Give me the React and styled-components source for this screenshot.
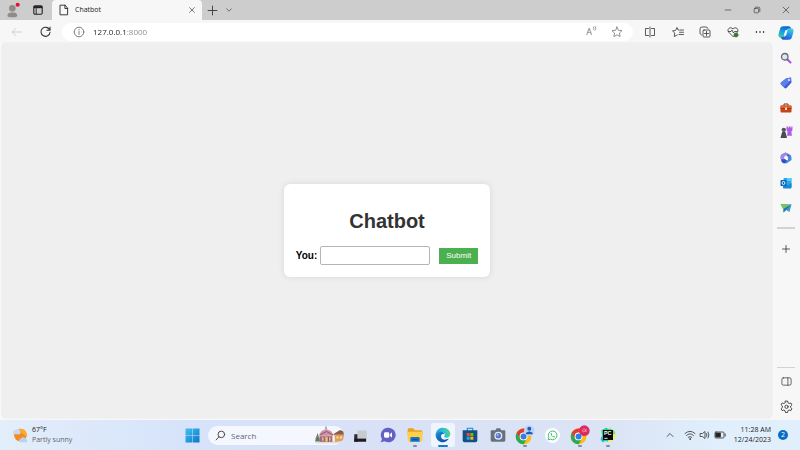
import React, { useState } from 'react';
import styled, { createGlobalStyle } from 'styled-components';

const ReloadIcon = () => (
	<Line viewBox="0 0 20 20" $size={13}>
		<path d="M16.6 8A7 7 0 1 0 17 11.2M17 3v5h-5" />
	</Line>
);

const ProfileIcon = () => (
	<Icon viewBox="0 0 22 22" $size={18}>
		<circle cx="9" cy="9" r="4" fill="#8f8b88" />
		<path d="M3 18.5c0-3 1.5-4.5 4-4.5h4c2.5 0 4 1.5 4 4.5-2.500 2-9.500 2-12 0z" fill="#8f8b88" />
		<circle cx="15.500" cy="4.500" r="2.500" fill="#e3152b" />
	</Icon>
);

const WorkspaceIcon = () => (
	<Icon viewBox="0 0 20 20" $size={12}>
		<rect x="3" y="3" width="14" height="14" rx="2" fill="none" stroke="#222" strokeWidth="1.8" />
		<path d="M3 3.5h14v3.500H3z" fill="#222" />
		<path d="M7 7v10" stroke="#222" strokeWidth="1.6" />
	</Icon>
);

const SearchColorIcon = () => (
	<Icon viewBox="0 0 24 24" $size={12}>
		<path d="M15 15l6 6" stroke="#a44fe0" strokeWidth="4" strokeLinecap="round" />
		<circle cx="9.5" cy="9.5" r="6.5" fill="#d8e9f4" stroke="#686b73" strokeWidth="2.6" />
	</Icon>
);

const TagIcon = () => (
	<Icon viewBox="0 0 24 24" $size={12}>
		<path d="M12 3l10-2 1 10-10 11c-1 1-3 1-4 0l-7-7c-1-1-1-3 0-4z" fill="#3a5bd8" />
		<path d="M12 3l10-2 .5 5L8 20l-6-5c-1-1-1-3 0-4z" fill="#5b80ec" />
		<circle cx="18" cy="6" r="2" fill="#e7edfb" />
	</Icon>
);

const ToolboxIcon = () => (
	<Icon viewBox="0 0 24 24" $size={12}>
		<path d="M8 8V4h8v4" fill="none" stroke="#7b2d16" strokeWidth="2" />
		<rect x="1" y="7" width="22" height="14" rx="2" fill="#c8431b" />
		<path d="M1 9c0-1 1-2 2-2h18c1 0 2 1 2 2v4H1z" fill="#e0622f" />
		<path d="M1 13h22" stroke="#8e2b10" strokeWidth="1.4" />
		<rect x="10" y="11" width="4" height="5" rx="1" fill="#f3dccf" />
	</Icon>
);

const GamesIcon = () => (
	<Icon viewBox="0 0 24 24" $size={13}>
		<path d="M12 1h3v2h1.500V1h3v2H21V1h2v7l-2 2 1 8h-9l1-8-2-2z" fill="#b05be6" />
		<circle cx="7" cy="7" r="4" fill="#55575f" />
		<path d="M4 11h6l2 7 1 4H1l1-4z" fill="#484a52" />
	</Icon>
);

const OfficeIcon = () => (
	<Icon viewBox="0 0 24 24" $size={12}>
		<path d="M11 1l10 5v7l-6-3V8l-4-2-4 3v8l-5-2c-1-3-1-8 1-10z" fill="#6d5bd6" />
		<path d="M20 6c2 1 3 3 3 6v4l-10 7-6-3 9-4V9z" fill="#3f8be8" />
		<path d="M2 15l6-2 6 4-4 6c-4 0-8-3-8-8z" fill="#394dbb" />
		<path d="M11 1l5 2-7 6-2 6-6-1V8z" fill="#a189ee" />
	</Icon>
);

const OutlookIcon = () => (
	<Icon viewBox="0 0 24 24" $size={12}>
		<rect x="7" y="2" width="16" height="19" rx="1.5" fill="#28a8ea" />
		<path d="M14 2h9v6h-9z" fill="#50d0f5" />
		<path d="M6 12l9 5 8-5v9c0 1-1 2-2 2H8c-1 0-2-1-2-2z" fill="#1588d8" />
		<rect x="1" y="6" width="12" height="12" rx="1.5" fill="#0a62b8" />
		<ellipse cx="7" cy="12" rx="2.8" ry="3.2" fill="none" stroke="#fff" strokeWidth="1.8" />
	</Icon>
);

const DropIcon = () => (
	<Icon viewBox="0 0 24 24" $size={12}>
		<path d="M1 4l22 1-4 15-7-4-5 5v-7z" fill="#3b9ed4" />
		<path d="M1 4l22 1-17 9z" fill="#7cc35b" />
		<path d="M7 14l16-9-11 11-5 5z" fill="#2c6fae" />
	</Icon>
);

const CopilotIcon = () => (
	<Icon viewBox="0 0 24 24" $size={16}>
		<defs>
			<linearGradient id="cpA" x1="0.6" y1="0" x2="0.3" y2="1">
				<stop offset="0" stopColor="#1a5fd0" />
				<stop offset="0.5" stopColor="#12a0dc" />
				<stop offset="1" stopColor="#3fc9a0" />
			</linearGradient>
			<linearGradient id="cpB" x1="0.7" y1="0" x2="0.3" y2="1">
				<stop offset="0" stopColor="#45d3d6" />
				<stop offset="0.5" stopColor="#2391ee" />
				<stop offset="1" stopColor="#1c57d6" />
			</linearGradient>
		</defs>
		<path d="M8 2h8c2 0 3 1 3.500 4H14l-3 9c-1 3-2 4-4 4H5c-4 0-5-3-4-6l2-7c1-3 2-4 5-4z" fill="url(#cpA)" />
		<path d="M16 22H8c-2 0-3-1-3.500-4H10l3-9c1-3 2-4 4-4h2c4 0 5 3 4 6l-2 7c-1 3-2 4-5 4z" fill="url(#cpB)" />
		<path d="M11 8h3.500l-2.500 8H8.500z" fill="#f2f9ff" />
	</Icon>
);

const WeatherIcon = () => (
	<Icon viewBox="0 0 24 24" $size={16}>
		<circle cx="12.5" cy="12" r="9.5" fill="#f28c1e" />
		<path d="M12.5 2.500a9.500 9.500 0 0 1 9 13c-3-5-9-6-13-12 1-.6 2.500-1 4-1z" fill="#fba92f" />
		<path d="M2 9c-2-3 1-5 3-4 2-4 8-2 7 2 2 2 0 4-2 4H4c-1 0-2-1-2-2z" fill="#c9d9f1" />
		<path d="M13 23c-4-1-3-5 0-5 1-4 7-3 7 0 4 0 4 5 1 5z" fill="#bdd0ec" />
	</Icon>
);

const WindowsIcon = () => (
	<Icon viewBox="0 0 30 30" $size={15}>
		<defs>
			<linearGradient id="win" x1="0" y1="0" x2="1" y2="1">
				<stop offset="0" stopColor="#42c3ef" />
				<stop offset="1" stopColor="#0874cc" />
			</linearGradient>
		</defs>
		<path d="M1 1h13.500v13.500H1zM15.500 1H29v13.500H15.500zM1 15.500h13.500V29H1zM15.500 15.500H29V29H15.500z" fill="url(#win)" />
	</Icon>
);

const HolidayScene = () => (
	<Scene viewBox="0 0 60 36" aria-hidden="true">
		<path d="M0 33c16-5 38-5 58-3l-4 5H6z" fill="#e9dcd8" />
		<path d="M2 31l5-17 6 17z" fill="#4d8468" />
		<path d="M3 26l4-6 5 6" stroke="#c86a60" strokeWidth="2" fill="none" />
		<rect x="11" y="19" width="26" height="13" fill="#b98293" />
		<path d="M9 19l6-9 9-4 10 4 6 9z" fill="#d492a0" />
		<path d="M12 18l13-7 13 7" stroke="#84586f" strokeWidth="2" fill="none" />
		<path d="M24 6V1M14 22v9M20 22v9M29 22v9M34 22v9" stroke="#725b7a" strokeWidth="2" />
		<path d="M16 23h3v6h-3zM23 22h4v9h-4zM30 23h3v6h-3z" fill="#f0c66c" />
		<path d="M39 16l13-8 8 3v7H40z" fill="#8e5c4a" />
		<path d="M41 17h19v12l-18 3z" fill="#dc9f62" />
		<path d="M45 21h4v4h-4zM52 21h4v4h-4z" fill="#ffe2a0" />
	</Scene>
);

const TaskViewIcon = () => (
	<Icon viewBox="0 0 24 24" $size={15}>
		<path d="M2 10h6v12H2z" fill="#2b2c2f" />
		<rect x="7" y="4" width="15" height="14" fill="#c9cacd" />
		<path d="M2 17h19v5H2z" fill="#1c1d20" />
	</Icon>
);

const ChatIcon = () => (
	<Icon viewBox="0 0 24 24" $size={16}>
		<path d="M12 1a11 11 0 1 1-5 20.5L1 23l2-5A11 11 0 0 1 12 1z" fill="#6460c4" />
		<rect x="6" y="8" width="8" height="8" rx="2" fill="#fff" />
		<path d="M15 11l3-3v8l-3-3z" fill="#fff" />
	</Icon>
);

const FolderIcon = () => (
	<Icon viewBox="0 0 24 24" $size={16}>
		<path d="M1 4c0-1 1-2 2-2h6l3 3h9c1 0 2 1 2 2v5H1z" fill="#e7a31f" />
		<path d="M1 7h22v13c0 1-1 2-2 2H3c-1 0-2-1-2-2z" fill="#ffcf48" />
		<path d="M5 22v-5c0-1 1-2 2-2h10c1 0 2 1 2 2v5z" fill="#1573c9" />
		<path d="M8 19h8" stroke="#0b4c8f" strokeWidth="1.5" />
	</Icon>
);

const EdgeIcon = () => (
	<Icon viewBox="0 0 24 24" $size={16}>
		<defs>
			<linearGradient id="edA" x1="0" y1="0.4" x2="1" y2="0.2">
				<stop offset="0" stopColor="#1f9fe3" />
				<stop offset="0.6" stopColor="#31c4cf" />
				<stop offset="1" stopColor="#62d857" />
			</linearGradient>
			<linearGradient id="edB" x1="0" y1="0" x2="0.8" y2="1">
				<stop offset="0" stopColor="#1b8fdd" />
				<stop offset="1" stopColor="#0e4a9c" />
			</linearGradient>
		</defs>
		<path d="M1 12C1 5 6 1 12 1c7 0 11 5 11 9 0 4-3 6-6 6-2 0-4-1-3-2 2-3 0-6-4-6-4 0-8 2-9 4z" fill="url(#edA)" />
		<path d="M1 12c1-3 4-5 8-5 3 0 5 2 5 4-1-1-5-1-5 3 0 5 6 7 12 3-2 4-6 6-9 6C6 23 1 18 1 12z" fill="url(#edB)" />
	</Icon>
);

const StoreIcon = () => (
	<Icon viewBox="0 0 24 24" $size={16}>
		<path d="M8 6V2h8v4" fill="none" stroke="#2b9de0" strokeWidth="2" />
		<path d="M1 5h22v15c0 2-1 3-3 3H4c-2 0-3-1-3-3z" fill="#154f86" />
		<path d="M7 9h4.500v4.500H7z" fill="#f25022" />
		<path d="M12.500 9H17v4.500h-4.500z" fill="#7fba00" />
		<path d="M7 14.500h4.500V19H7z" fill="#21a5ee" />
		<path d="M12.500 14.500H17V19h-4.500z" fill="#ffb900" />
	</Icon>
);

const CameraIcon = () => (
	<Icon viewBox="0 0 24 24" $size={16}>
		<path d="M8 5l2-3h5l2 3h5c1 0 1 1 1 2v13c0 1-1 2-2 2H3c-1 0-2-1-2-2V7c0-1 0-2 1-2z" fill="#68717d" />
		<circle cx="12.5" cy="13" r="6" fill="#e4e9f2" />
		<circle cx="12.5" cy="13" r="4" fill="#5578c5" />
		<circle cx="11.5" cy="12" r="1.5" fill="#a9c3f2" />
	</Icon>
);

const ChromeIcon = ({ badge }) => (
	<Icon viewBox="0 0 28 28" $size={20}>
		<circle cx="12" cy="16" r="11" fill="#fbbc16" />
		<path d="M12 16L2.5 10.5A11 11 0 0 0 12 27l5-8z" fill="#2da94f" />
		<path d="M2.5 10.5A11 11 0 0 1 21.5 10.5H12L7 19z" fill="#e33b2e" />
		<circle cx="12" cy="16" r="5.5" fill="#fff" />
		<circle cx="12" cy="16" r="4.2" fill="#2f7de9" />
		<circle cx="20" cy="8" r="7.5" fill={badge === 'user' ? '#bdd4fa' : '#de2b5d'} />
		{badge === 'user' ? (
			<path d="M20 2.5a2.800 2.800 0 1 1 0 5.600 2.800 2.800 0 0 1 0-5.600zM15 13c0-5 10-5 10 0z" fill="#205cb5" />
		) : (
			<path d="M21.500 6c-2-1-4 0-4 2s3 2 4 0l1-2-1 2c0 2 2 1 2 0" fill="none" stroke="#f6a4bd" strokeWidth="1.2" />
		)}
	</Icon>
);

const WhatsAppIcon = () => (
	<Icon viewBox="0 0 24 24" $size={15}>
		<circle cx="12" cy="12" r="12" fill="#fff" />
		<path d="M5 19l1-4a7 7 0 1 1 3 3z" fill="none" stroke="#35c268" strokeWidth="1.5" />
		<path d="M9 8.500c0 4 3 6.500 6 6.500l1-1.500-2-1-1 1c-1-.5-2-1.500-2.500-2.500l1-1-1-2z" fill="#35c268" />
	</Icon>
);

const PyCharmIcon = () => (
	<Icon viewBox="0 0 24 24" $size={16}>
		<path d="M2 5l7-4 8 4-5 17-8-2z" fill="#21d789" />
		<path d="M14 1l8 5 1 5-6 3z" fill="#67e45c" />
		<path d="M18 9l5 3-2 8-9 3z" fill="#f5ee4c" />
		<path d="M2 14l6 7-4 2-3-4z" fill="#18b7c8" />
		<rect x="4.5" y="4.5" width="15" height="15" fill="#080808" />
		<text x="6" y="12" fill="#fff" fontSize="8" fontWeight="700" fontFamily="Liberation Sans, sans-serif">PC</text>
		<path d="M6.5 17h5" stroke="#fff" strokeWidth="1.3" />
	</Icon>
);

const GearIcon = () => (
	<Line viewBox="0 0 24 24" $size={13}>
		<path d="M10 2h4l.7 3.200 2.200 1.300 3.100-1 2 3.500-2.400 2.200v2.600L22 16l-2 3.500-3.100-1-2.200 1.300L14 23h-4l-.7-3.200-2.200-1.300-3.100 1L2 16l2.400-2.200v-2.600L2 9l2-3.500 3.100 1 2.200-1.300z" />
		<circle cx="12" cy="12.5" r="3" />
	</Line>
);

const sideApps = [
	{ name: 'Search', Glyph: SearchColorIcon },
	{ name: 'Shopping', Glyph: TagIcon },
	{ name: 'Tools', Glyph: ToolboxIcon },
	{ name: 'Games', Glyph: GamesIcon },
	{ name: 'Microsoft 365', Glyph: OfficeIcon },
	{ name: 'Outlook', Glyph: OutlookIcon },
	{ name: 'Drop', Glyph: DropIcon },
];

const taskApps = [
	{ name: 'Task view', icon: <TaskViewIcon /> },
	{ name: 'Chat', icon: <ChatIcon /> },
	{ name: 'File Explorer', icon: <FolderIcon />, running: true },
	{ name: 'Edge', icon: <EdgeIcon />, active: true },
	{ name: 'Store', icon: <StoreIcon /> },
	{ name: 'Camera', icon: <CameraIcon /> },
	{ name: 'Chrome', icon: <ChromeIcon badge="user" />, running: true },
	{ name: 'WhatsApp', icon: <WhatsAppIcon /> },
	{ name: 'Chrome, second profile', icon: <ChromeIcon badge="pink" />, running: true },
	{ name: 'PyCharm', icon: <PyCharmIcon />, running: true },
];

const TitleBar = () => (
	<TabStrip>
		<TabTools>
			<IconButton aria-label="Profile"><ProfileIcon /></IconButton>
			<IconButton aria-label="Workspaces"><WorkspaceIcon /></IconButton>
		</TabTools>
		<Tab>
			<Line viewBox="0 0 20 20" $size={12}>
				<path d="M4 2h8l4 5v11H4zM11.500 2v5.500H16" />
			</Line>
			<TabTitle>Chatbot</TabTitle>
			<IconButton $width={12} aria-label="Close tab">
				<Line viewBox="0 0 20 20" $size={8}><path d="M4 4l12 12M16 4L4 16" /></Line>
			</IconButton>
		</Tab>
		<IconButton $width={21} aria-label="New tab">
			<Line viewBox="0 0 20 20" $size={11}><path d="M10 2v16M2 10h16" /></Line>
		</IconButton>
		<IconButton $width={12} aria-label="Tab list">
			<Line viewBox="0 0 20 20" $size={8}><path d="M4 7l6 6 6-6" /></Line>
		</IconButton>
		<WindowControls>
			<IconButton $width={29} aria-label="Minimize">
				<Line viewBox="0 0 20 20" $size={8}><path d="M3 10h14" /></Line>
			</IconButton>
			<IconButton $width={29} aria-label="Restore">
				<Line viewBox="0 0 20 20" $size={8}>
					<rect x="3" y="6" width="11" height="11" rx="2" />
					<path d="M6 3h8q3 0 3 3v8" />
				</Line>
			</IconButton>
			<IconButton $width={29} aria-label="Close">
				<Line viewBox="0 0 20 20" $size={8}><path d="M3 3l14 14M17 3L3 17" /></Line>
			</IconButton>
		</WindowControls>
	</TabStrip>
);

const Toolbar = () => {
	const [url, setUrl] = useState('127.0.0.1:8000');

	return (
		<ToolbarRow>
			<NavButtons>
				<IconButton disabled aria-label="Back">
					<Line viewBox="0 0 20 20" $size={12} $color="#cfcfcf"><path d="M18 10H2M8 4l-6 6 6 6" /></Line>
				</IconButton>
				<IconButton aria-label="Reload"><ReloadIcon /></IconButton>
			</NavButtons>
			<AddressBar>
				<Line viewBox="0 0 20 20" $size={12} $color="#777">
					<circle cx="10" cy="10" r="8" />
					<path d="M10 9v5M10 5.500v1" />
				</Line>
				<AddressInput aria-label="Address" value={url} onChange={(e) => setUrl(e.target.value)} />
				<ReadAloudButton aria-label="Read aloud">
					<ReadLetter>A</ReadLetter>
					<Line viewBox="0 0 8 12" $size={6} $color="#888"><path d="M1 2q2 2 0 5M4 0q4 4 0 9" /></Line>
				</ReadAloudButton>
				<IconButton aria-label="Add to favorites">
					<Line viewBox="0 0 24 24" $size={12} $color="#777">
						<path d="M12 2l3 6.500 7 .8-5.200 4.800 1.400 7L12 17.600 5.800 21.100l1.400-7L2 9.300l7-.8z" />
					</Line>
				</IconButton>
			</AddressBar>
			<ToolButtons>
				<IconButton aria-label="Split screen">
					<Line viewBox="0 0 24 24" $size={12}><path d="M9 5H3v14h6M15 5h6v14h-6M12 2v20" /></Line>
				</IconButton>
				<IconButton aria-label="Favorites">
					<Line viewBox="0 0 24 24" $size={12}>
						<path d="M14 8h-2l-2-5-3 6-6 .8L5.500 14l-1 7 6-3M16 8h7M15 12.500h8M14 17h9" />
					</Line>
				</IconButton>
				<IconButton aria-label="Collections">
					<Line viewBox="0 0 24 24" $size={12}>
						<rect x="8" y="8" width="14" height="14" rx="2" />
						<path d="M5 18q-3-1-3-4V6q0-4 4-4h8q3 0 4 3M15 11v8M11 15h8" />
					</Line>
				</IconButton>
				<IconButton aria-label="Browser essentials">
					<Line viewBox="0 0 24 24" $size={12}>
						<path d="M12 21L3 12C-1 6 7 0 12 6c5-6 13 0 9 6z" />
						<path d="M3 11h5l2-3 3 6 2-3h5" />
						<circle cx="18" cy="18" r="4" fill="#2f7a38" stroke="#2f7a38" />
					</Line>
				</IconButton>
				<IconButton aria-label="Settings and more">
					<Icon viewBox="0 0 20 20" $size={12}>
						<circle cx="4" cy="10" r="1.3" />
						<circle cx="10" cy="10" r="1.3" />
						<circle cx="16" cy="10" r="1.3" />
					</Icon>
				</IconButton>
			</ToolButtons>
		</ToolbarRow>
	);
};

const ChatCard = () => {
	const [message, setMessage] = useState('');

	const handleSubmit = (e) => {
		e.preventDefault();
		setMessage('');
	};

	return (
		<Card>
			<CardTitle>Chatbot</CardTitle>
			<ChatForm onSubmit={handleSubmit}>
				<ChatLabel htmlFor="message">You:</ChatLabel>
				<ChatInput id="message" type="text" value={message} onChange={(e) => setMessage(e.target.value)} />
				<SubmitButton type="submit">Submit</SubmitButton>
			</ChatForm>
		</Card>
	);
};

const Sidebar = () => (
	<SideColumn>
		<SideButton aria-label="Copilot"><CopilotIcon /></SideButton>
		{sideApps.map(({ name, Glyph }) => (
			<SideButton key={name} aria-label={name}><Glyph /></SideButton>
		))}
		<SideRule />
		<SideButton aria-label="Customize sidebar">
			<Line viewBox="0 0 20 20" $size={10}><path d="M10 3v14M3 10h14" /></Line>
		</SideButton>
		<SideBottom>
			<SideRule $tight />
			<SideButton aria-label="Hide sidebar">
				<Line viewBox="0 0 24 24" $size={11}>
					<rect x="2" y="4" width="20" height="16" rx="3" />
					<path d="M15 4v16" />
				</Line>
			</SideButton>
			<SideButton aria-label="Settings"><GearIcon /></SideButton>
		</SideBottom>
	</SideColumn>
);

const Taskbar = () => (
	<TaskbarRow>
		<Weather>
			<WeatherIcon />
			<span>
				<SmallLine>67°F</SmallLine>
				<SmallLine $muted>Partly sunny</SmallLine>
			</span>
		</Weather>
		<TaskCenter>
			<TaskButton aria-label="Start"><WindowsIcon /></TaskButton>
			<SearchBox>
				<Line viewBox="0 0 20 20" $size={11}>
					<circle cx="11.5" cy="8" r="6" />
					<path d="M7 12.500l-5 5.500" />
				</Line>
				<SearchInput type="text" placeholder="Search" aria-label="Search" />
				<HolidayScene />
			</SearchBox>
			<TaskApps>
				{taskApps.map((app) => (
					<TaskButton key={app.name} aria-label={app.name} $active={app.active}>
						{app.icon}
						{(app.active || app.running) && <RunMark $active={app.active} />}
					</TaskButton>
				))}
			</TaskApps>
		</TaskCenter>
		<Tray>
			<IconButton $width={20} aria-label="Hidden icons">
				<Line viewBox="0 0 20 20" $size={10}><path d="M4 13l6-6 6 6" /></Line>
			</IconButton>
			<TrayStatus aria-label="Network, volume and battery">
				<Line viewBox="0 0 24 24" $size={12}>
					<path d="M2 9q10-9 20 0M5 13q7-7 14 0M8.500 16.500q3.500-3 7 0" />
					<circle cx="12" cy="20" r="1" />
				</Line>
				<Line viewBox="0 0 24 24" $size={12}>
					<path d="M3 9h4l5-4v14l-5-4H3zM15 9q2 3 0 6M18 6q4 6 0 12" />
				</Line>
				<Line viewBox="0 0 24 24" $size={12}>
					<rect x="2" y="6" width="18" height="12" rx="2" />
					<path d="M4 8h9v8H4z" fill="#222" />
					<path d="M22.500 10v4" />
				</Line>
			</TrayStatus>
			<Clock>
				<SmallLine>11:28 AM</SmallLine>
				<SmallLine>12/24/2023</SmallLine>
			</Clock>
			<Notices aria-label="2 notifications">2</Notices>
		</Tray>
	</TaskbarRow>
);

export default function App() {
	return (
		<>
			<GlobalStyle />
			<Screen>
				<TitleBar />
				<Browser>
					<BrowserMain>
						<Toolbar />
						<Page>
							<ChatCard />
						</Page>
					</BrowserMain>
					<Sidebar />
				</Browser>
				<Taskbar />
			</Screen>
		</>
	);
}

const GlobalStyle = createGlobalStyle`
	* {
		box-sizing: border-box;
	}

	body {
		margin: 0;
		font-family: "Open Sans", "Noto Sans", sans-serif;
		font-size: 7px;
		color: #222;
	}

	button, input {
		font-family: inherit;
		color: inherit;
	}
`;

const Screen = styled.div`
	display: flex;
	flex-direction: column;
	min-height: 100vh;
	background: #f7f7f7;
`;

const Icon = styled.svg`
	display: block;
	flex: none;
	width: ${props => props.$size}px;
	height: ${props => props.$size}px;
`;

const Line = styled(Icon)`
	fill: none;
	stroke: ${props => props.$color || '#333'};
	stroke-width: 1.6;
	stroke-linecap: round;
	stroke-linejoin: round;
`;

const Scene = styled.svg`
	flex: none;
	width: 30px;
	height: 18px;
`;

const IconButton = styled.button`
	display: flex;
	align-items: center;
	justify-content: center;
	flex: none;
	width: ${props => props.$width || 18}px;
	height: 18px;
	padding: 0;
	border: none;
	background: none;
`;

const ReadAloudButton = styled(IconButton)`
	align-items: flex-start;
	padding-top: 3px;
`;

const TabStrip = styled.header`
	display: flex;
	align-items: center;
	height: 20px;
	background: #cdcdcd;
`;

const TabTools = styled.div`
	display: flex;
	gap: 6px;
	padding: 0 5px;
`;

const Tab = styled.div`
	display: flex;
	align-items: center;
	width: 150px;
	height: 20px;
	padding: 0 4px 0 6px;
	gap: 5px;
	background: #f7f7f7;
	border-radius: 4px 4px 0 0;
`;

const TabTitle = styled.span`
	flex: 1;
	line-height: 12px;
`;

const WindowControls = styled.div`
	display: flex;
	margin-left: auto;
`;

const Browser = styled.div`
	display: flex;
	flex: 1;
`;

const BrowserMain = styled.div`
	display: flex;
	flex-direction: column;
	flex: 1;
`;

const ToolbarRow = styled.div`
	display: flex;
	align-items: center;
	height: 23px;
	padding-right: 3px;
	gap: 8px;
`;

const NavButtons = styled.div`
	display: flex;
	gap: 10px;
	padding-left: 8px;
`;

const AddressBar = styled.div`
	display: flex;
	align-items: center;
	flex: 1;
	height: 18px;
	padding: 0 7px 0 11px;
	gap: 7px;
	background: #fff;
	border-radius: 9px;
`;

const AddressInput = styled.input`
	flex: 1;
	min-width: 0;
	padding: 0 0 0 1px;
	border: none;
	outline: none;
	font-size: 8px;
	line-height: 14px;
	color: transparent;
	caret-color: #222;
	/* host is dark, the port after it is grey */
	background: linear-gradient(90deg, #222 35px, #888 35px);
	background-clip: text;
`;

const ReadLetter = styled.span`
	font-size: 9px;
	line-height: 12px;
	color: #777;
`;

const ToolButtons = styled.div`
	display: flex;
	justify-content: space-between;
	width: 128px;
`;

const Page = styled.main`
	display: flex;
	align-items: center;
	justify-content: center;
	flex: 1;
	margin: 0 0 2px 2px;
	background: #efefef;
	border-radius: 5px;
	box-shadow: 0 0 1px rgba(0, 0, 0, 0.2);
	font-family: "Liberation Sans", Arial, sans-serif;
`;

const Card = styled.section`
	padding: 12px;
	background: #fff;
	border-radius: 6px;
	box-shadow: 0 0 6px rgba(0, 0, 0, 0.1);
`;

const CardTitle = styled.h1`
	margin: 13px 0;
	font-size: 20px;
	line-height: 24px;
	text-align: center;
	color: #333;
`;

const ChatForm = styled.form`
	display: flex;
	align-items: center;
`;

const ChatLabel = styled.label`
	margin-right: 3px;
	font-size: 10px;
	font-weight: 700;
	color: #000;
`;

const ChatInput = styled.input`
	width: 110px;
	height: 19px;
	margin-right: 9px;
	padding: 0 5px;
	border: 1px solid #b5b5b5;
	border-radius: 2px;
	background: #fff;
	font-size: 8px;
`;

const SubmitButton = styled.button`
	height: 16px;
	padding: 0 7px;
	border: none;
	background: #4caf50;
	color: #fff;
	font-size: 8px;
	cursor: pointer;
`;

const SideColumn = styled.aside`
	display: flex;
	flex-direction: column;
	align-items: center;
	width: 28px;
	padding-bottom: 1px;
`;

const SideButton = styled(IconButton)`
	width: 28px;
	height: 25px;
`;

const SideRule = styled.hr`
	width: 18px;
	margin: ${props => props.$tight ? '0 auto 1px' : '7px auto'};
	border: none;
	border-top: ${props => props.$tight ? 1 : 2}px solid #d2d2d2;
`;

const SideBottom = styled.div`
	margin-top: auto;
`;

const TaskbarRow = styled.footer`
	display: grid;
	grid-template-columns: 1fr auto 1fr;
	align-items: center;
	height: 30px;
	background: linear-gradient(90deg, #e3eefb 0%, #d6e3fa 23%, #d9e1f6 50%, #dbe3f5 75%, #e0effb 90%);
`;

const Weather = styled.div`
	display: flex;
	align-items: center;
	gap: 4px;
	padding-left: 12px;
`;

const SmallLine = styled.span`
	display: block;
	line-height: 10px;
	white-space: nowrap;
	color: ${props => props.$muted ? '#5d6470' : '#222'};
`;

const TaskCenter = styled.nav`
	display: flex;
	align-items: center;
	gap: 4px;
`;

const TaskApps = styled.div`
	display: flex;
	justify-content: space-between;
	width: 272px;
`;

const TaskButton = styled.button`
	position: relative;
	display: flex;
	align-items: center;
	justify-content: center;
	width: 24px;
	height: 24px;
	padding: 0;
	border: none;
	border-radius: 3px;
	background: ${props => props.$active ? '#f0f5fd' : 'none'};
`;

const RunMark = styled.span`
	position: absolute;
	bottom: 0;
	left: 50%;
	width: ${props => props.$active ? 10 : 4}px;
	height: 2px;
	transform: translateX(-50%);
	border-radius: 1px;
	background: ${props => props.$active ? '#1a78cc' : '#858b98'};
`;

const SearchBox = styled.div`
	display: flex;
	align-items: center;
	width: 136px;
	height: 19px;
	padding-left: 7px;
	gap: 5px;
	overflow: hidden;
	background: #f4f8fe;
	border-radius: 10px;
`;

const SearchInput = styled.input`
	flex: 1;
	min-width: 0;
	padding: 0;
	border: none;
	outline: none;
	background: none;
	font-size: 8px;

	&::placeholder {
		color: #5f6570;
		opacity: 1;
	}
`;

const Tray = styled.div`
	display: flex;
	align-items: center;
	justify-content: flex-end;
	padding-right: 12px;
`;

const TrayStatus = styled.button`
	display: flex;
	align-items: center;
	gap: 3px;
	padding: 0;
	margin: 0 8px 0 4px;
	border: none;
	background: none;
`;

const Clock = styled.div`
	margin-right: 7px;
	text-align: right;
`;

const Notices = styled.button`
	width: 10px;
	height: 10px;
	padding: 0;
	border: none;
	border-radius: 50%;
	background: #0a6cc4;
	color: #fff;
	font-size: 7px;
	line-height: 10px;
`;
